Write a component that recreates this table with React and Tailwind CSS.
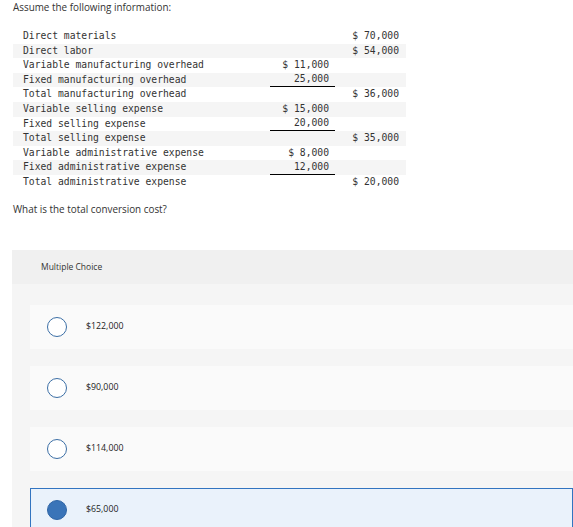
import React from 'react';

const rows = [
  { label: 'Direct materials', mid: '', total: '$ 70,000' },
  { label: 'Direct labor', mid: '', total: '$ 54,000' },
  { label: 'Variable manufacturing overhead', mid: '$ 11,000', total: '' },
  { label: 'Fixed manufacturing overhead', mid: '25,000', total: '', line: true },
  { label: 'Total manufacturing overhead', mid: '', total: '$ 36,000' },
  { label: 'Variable selling expense', mid: '$ 15,000', total: '' },
  { label: 'Fixed selling expense', mid: '20,000', total: '', line: true },
  { label: 'Total selling expense', mid: '', total: '$ 35,000' },
  { label: 'Variable administrative expense', mid: '$ 8,000', total: '' },
  { label: 'Fixed administrative expense', mid: '12,000', total: '', line: true },
  { label: 'Total administrative expense', mid: '', total: '$ 20,000' },
];

const choices = ['$122,000', '$90,000', '$114,000', '$65,000'];

function Radio({ checked }) {
  return checked ? (
    <span className="block w-[20px] h-[20px] rounded-full bg-[#3a74b8] border border-[#2f65a6]" />
  ) : (
    <span className="block w-[20px] h-[20px] rounded-full bg-white border-[1.5px] border-[#3b6ea5]" />
  );
}

export default function App() {
  const selected = 3;

  return (
    <div className="w-[573px] h-[527px] overflow-hidden bg-white text-[#333] font-['Open_Sans',sans-serif]">
      <p className="pl-[13px] text-[9.9px] leading-[15px]">Assume the following information:</p>

      <div className="mt-[14px] ml-[13px] w-[393px] font-['DejaVu_Sans_Mono',monospace] text-[9.7px] text-[#333]">
        {rows.map((r, i) => (
          <div
            key={r.label}
            className={`flex h-[14.6px] items-center ${i % 2 === 1 ? 'bg-[#f5f5f5]' : 'bg-white'}`}
          >
            <div className="flex-1 pl-[10px] whitespace-pre">{r.label}</div>
            <div
              className={`w-[65px] h-full flex items-center justify-end pr-[6px] whitespace-pre ${
                r.line ? 'border-b border-black' : ''
              }`}
            >
              {r.mid}
            </div>
            <div className="w-[71px] pr-[7px] text-right whitespace-pre">{r.total}</div>
          </div>
        ))}
      </div>

      <p className="mt-[12.4px] pl-[13px] text-[9.9px] leading-[14px]">What is the total conversion cost?</p>

      <div className="mt-[34px] ml-[12px]">
        <div className="h-[34px] bg-[#f0f0f0] flex items-center pl-[29px] text-[8.5px]">Multiple Choice</div>
        <div className="bg-[#f5f5f5] pt-[21px] pl-[18px] pb-[20px] flex flex-col gap-[17px]">
          {choices.map((c, i) =>
            i === selected ? (
              <div
                key={c}
                className="h-[44px] flex items-center pl-[16px] bg-[#eaf2fb] border border-[#3274c0]"
              >
                <Radio checked />
                <span className="ml-[19px] text-[8.8px] text-[#222]">{c}</span>
              </div>
            ) : (
              <div key={c} className="h-[44px] flex items-center pl-[17px] bg-[#fafafa]">
                <Radio />
                <span className="ml-[19px] text-[8.8px] text-[#222]">{c}</span>
              </div>
            )
          )}
        </div>
      </div>
    </div>
  );
}
